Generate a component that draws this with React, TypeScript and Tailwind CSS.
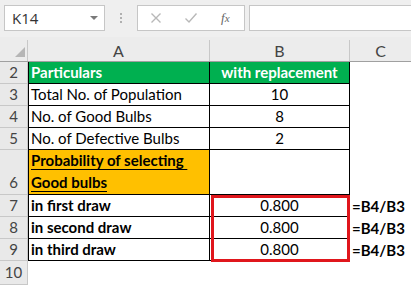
import React from 'react'

// Small spreadsheet grab: formula bar, column headers and a bordered table

const rowNum = 'w-[28px] shrink-0 border-r border-b border-[#c8c8c8] bg-[#e9e9e9] flex items-center justify-center text-[15px] text-[#444]'
const cellA = 'w-[182px] shrink-0 border-l border-r border-b border-black flex items-center pl-[2px] text-[15px]'
const cellB = 'w-[140px] shrink-0 border-r border-b border-black flex items-center justify-center text-[15px]'
const cellC = 'flex-1 flex items-center pl-[2px] text-[15px]'

const plainRows = [
  { n: 3, a: 'Total No. of Population', b: '10' },
  { n: 4, a: 'No. of Good Bulbs', b: '8' },
  { n: 5, a: 'No. of Defective Bulbs', b: '2' },
]

const drawRows = [
  { n: 7, a: 'in first draw' },
  { n: 8, a: 'in second draw' },
  { n: 9, a: 'in third draw' },
]

export default function App() {
  return (
    <div className="w-[411px] h-[285px] overflow-hidden bg-white text-black font-['Lato',sans-serif]">
      {/* formula bar */}
      <div className="flex h-[37px] items-start bg-[#efefef] pt-[5px] pl-[4px]">
        <div className="relative flex h-[26px] w-[101px] shrink-0 items-center border border-[#c6c6c6] bg-white pl-[7px] text-[15px] text-[#333] font-['Open_Sans',sans-serif]">
          K14
          <span className="absolute right-[6px] top-[10px] h-0 w-0 border-x-[4px] border-t-[4px] border-x-transparent border-t-[#7a7a7a]" />
        </div>
        <div className="flex h-[26px] w-[32px] shrink-0 flex-col items-center justify-center gap-[2px]">
          <span className="h-[2px] w-[2px] bg-[#b0b0b0]" />
          <span className="h-[2px] w-[2px] bg-[#b0b0b0]" />
          <span className="h-[2px] w-[2px] bg-[#b0b0b0]" />
        </div>
        <div className="flex h-[26px] w-[108px] shrink-0 items-center border border-[#c6c6c6] bg-white">
          <svg width="12" height="12" viewBox="0 0 12 12" className="ml-[12px]">
            <path d="M1.5 1.5 L10.5 10.5 M10.5 1.5 L1.5 10.5" stroke="#b8b8b8" strokeWidth="1.4" />
          </svg>
          <svg width="14" height="12" viewBox="0 0 14 12" className="ml-[22px]">
            <path d="M1.5 6.5 L5 10 L12.5 1.5" stroke="#b8b8b8" strokeWidth="1.4" fill="none" />
          </svg>
          <span className="ml-[23px] font-['Liberation_Serif',serif] italic text-[13px] text-[#666]">
            f<span className="text-[11px]">x</span>
          </span>
        </div>
        <div className="ml-[4px] h-[26px] flex-1 border border-r-0 border-[#c6c6c6] bg-white" />
      </div>

      {/* column headers */}
      <div className="flex h-[25px] border-b border-[#a0a0a0] bg-[#ececec] pt-[3px] text-[16px] text-[#444]">
        <div className="relative w-[28px] shrink-0 border-r border-[#c8c8c8]">
          <span className="absolute left-[15px] top-[7px] h-0 w-0 border-b-[10px] border-l-[10px] border-l-transparent border-b-[#b6b6b6]" />
        </div>
        <div className="flex w-[182px] shrink-0 items-center justify-center border-r border-[#c8c8c8]">A</div>
        <div className="flex w-[140px] shrink-0 items-center justify-center border-r border-[#c8c8c8]">B</div>
        <div className="flex flex-1 items-center justify-center">C</div>
      </div>

      {/* row 2 */}
      <div className="flex h-[22px]">
        <div className={rowNum}>2</div>
        <div className={`${cellA} bg-[#00b050] font-bold text-white`}>Particulars</div>
        <div className={`${cellB} bg-[#00b050] font-bold text-white`}>with replacement</div>
        <div className={cellC} />
      </div>

      {plainRows.map((r) => (
        <div key={r.n} className="flex h-[22px]">
          <div className={rowNum}>{r.n}</div>
          <div className={cellA}>{r.a}</div>
          <div className={cellB}>{r.b}</div>
          <div className={cellC} />
        </div>
      ))}

      {/* row 6 */}
      <div className="flex h-[45px]">
        <div className={`${rowNum} !items-end pb-[1px]`}>6</div>
        <div className={`${cellA} bg-[#ffc000] !items-end pb-[1px] font-bold leading-[22px] underline decoration-1 underline-offset-[3px]`}>
          Probability of selecting&nbsp;
          <br />
          Good bulbs
        </div>
        <div className={cellB} />
        <div className={cellC} />
      </div>

      {/* rows 7-9 with red outline */}
      <div className="relative">
        {drawRows.map((r) => (
          <div key={r.n} className="flex h-[22px]">
            <div className={rowNum}>{r.n}</div>
            <div className={`${cellA} font-bold`}>{r.a}</div>
            <div className={cellB}>0.800</div>
            <div className={`${cellC} font-bold`}>=B4/B3</div>
          </div>
        ))}
        <div className="absolute left-[211px] top-0 h-[67px] w-[139px] border-[3px] border-[#e0161c]" />
      </div>

      {/* row 10 */}
      <div className="flex h-[24px]">
        <div className={rowNum}>10</div>
        <div className="flex-1" />
      </div>
    </div>
  )
}
